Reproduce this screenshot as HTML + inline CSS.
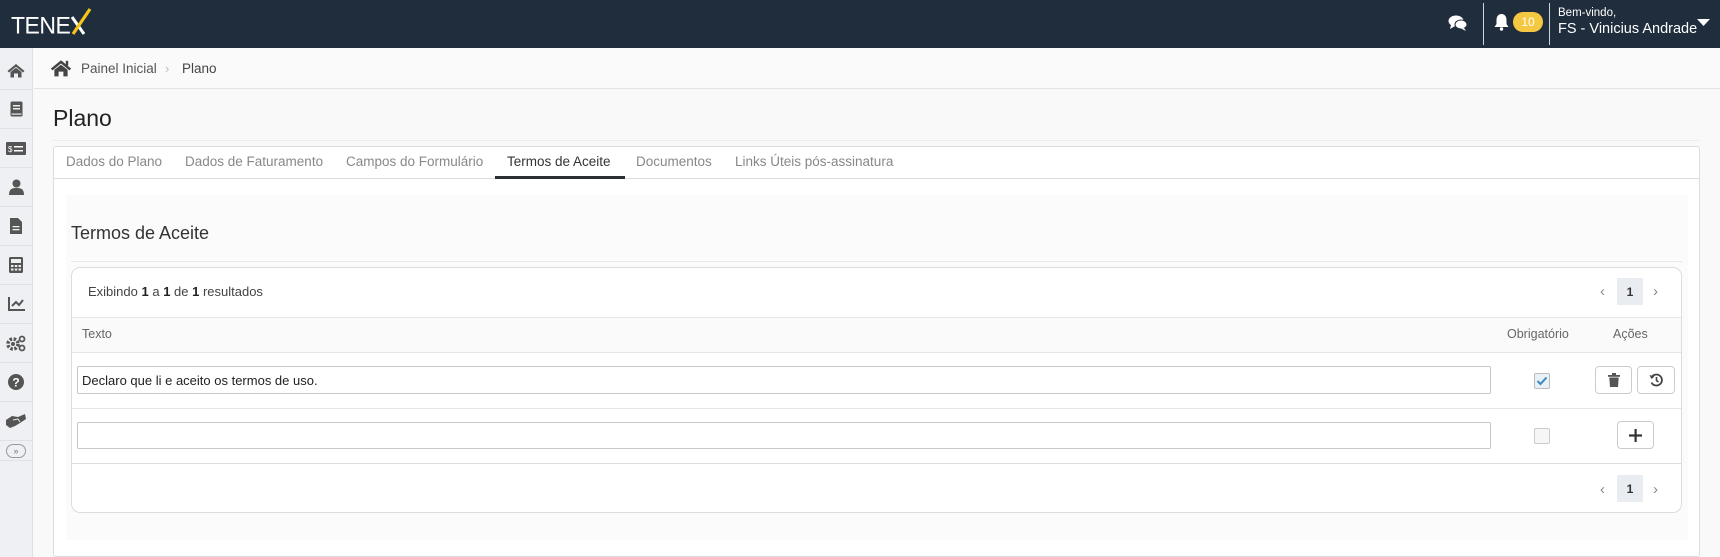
<!DOCTYPE html>
<html><head><meta charset="utf-8"><style>
*{box-sizing:border-box;margin:0;padding:0}
body{width:1720px;height:557px;overflow:hidden;background:#f9f9f9;font-family:"Liberation Sans",sans-serif;color:#333;position:relative}
.abs{position:absolute}
.hdr{left:0;top:0;width:1720px;height:48px;background:#1f2d3d}
.sb{left:0;top:48px;width:33px;height:509px;background:#eef0f3;border-right:1px solid #dde0e4}
.sbi{position:absolute;left:0;width:32px;height:39px;border-bottom:1px solid #dfe2e6;display:flex;align-items:center;justify-content:center}
.txt{white-space:nowrap}
.tab{position:absolute;top:154px;font-size:13.5px;color:#888}
.pg{font-size:13px;color:#777}
.pbox{background:#e9edf2;width:26px;height:27px;font-size:12px;font-weight:bold;color:#333;display:flex;align-items:center;justify-content:center}
.inp{background:#fff;border:1px solid #c8c8c8;border-radius:2px}
.btn{background:#fff;border:1px solid #ccc;border-radius:4px;display:flex;align-items:center;justify-content:center}
</style></head><body>
<div class="abs hdr"></div>
<div class="abs txt" style="left:11px;top:12px;font-size:23px;color:#fff;letter-spacing:-0.5px;transform:scaleY(1.05)">TENE</div>
<svg class="abs" style="left:68px;top:6px" width="28" height="34" viewBox="0 0 28 34"><path d="M4 11 L16 28" stroke="#fff" stroke-width="3"/><path d="M5 28 L22 3" stroke="#f5c518" stroke-width="3.2"/></svg>
<!-- chat -->
<svg class="abs" style="left:1448px;top:14px" width="20" height="18" viewBox="0 0 20 18"><ellipse cx="8" cy="7" rx="7.5" ry="5.5" fill="#fff"/><path d="M3 11 L2 15 L7 12Z" fill="#fff"/><ellipse cx="13" cy="10.5" rx="6" ry="4.5" fill="#fff" stroke="#1f2d3d" stroke-width="1"/><path d="M16 14 L18 17 L13 14.5Z" fill="#fff"/></svg>
<div class="abs" style="left:1483px;top:3px;width:1px;height:42px;background:#cfd4da"></div>
<svg class="abs" style="left:1494px;top:13px" width="15" height="18" viewBox="0 0 15 18"><path d="M7.5 1 C4 1 2.5 4 2.5 7 L2.5 11 L0.5 14 L14.5 14 L12.5 11 L12.5 7 C12.5 4 11 1 7.5 1Z" fill="#fff"/><circle cx="7.5" cy="16" r="1.7" fill="#fff"/></svg>
<div class="abs" style="left:1513px;top:12px;width:30px;height:20px;border-radius:10px;background:#f5c842;color:#fff;font-size:12px;display:flex;align-items:center;justify-content:center">10</div>
<div class="abs" style="left:1549px;top:3px;width:1px;height:42px;background:#cfd4da"></div>
<div class="abs txt" style="left:1558px;top:7px;font-size:11.5px;color:#fff">Bem-vindo,</div>
<div class="abs txt" style="left:1558px;top:21px;font-size:14.5px;color:#fff">FS - Vinicius Andrade</div>
<svg class="abs" style="left:1697px;top:19px" width="13" height="8"><path d="M0 0H13L6.5 7Z" fill="#fff"/></svg>

<div class="abs sb"></div>
<div class="sbi" style="top:51px"><svg width="18" height="15" viewBox="0 0 18 15"><path d="M9 1 L0.5 8 L2 9.5 L9 3.8 L16 9.5 L17.5 8Z M3.5 9 L9 4.8 L14.5 9 V14.5 H11 V10.5 H7 V14.5 H3.5Z" fill="#555"/></svg></div>
<div class="sbi" style="top:90px"><svg width="13" height="16"><rect x="0.5" y="0.5" width="12" height="15" rx="1.5" fill="#555"/><rect x="3" y="4" width="7" height="1.5" fill="#eee"/><rect x="3" y="7" width="7" height="1.5" fill="#eee"/><rect x="1.5" y="12.5" width="10" height="1.2" fill="#eee"/></svg></div>
<div class="sbi" style="top:129px"><svg width="20" height="13"><rect width="20" height="13" rx="1" fill="#555"/><text x="2" y="10" font-size="8" fill="#fff" font-family="Liberation Sans">$</text><rect x="8" y="4" width="9" height="1.5" fill="#fff"/><rect x="8" y="8" width="9" height="1.5" fill="#fff"/></svg></div>
<div class="sbi" style="top:168px"><svg width="15" height="16"><circle cx="7.5" cy="4.5" r="4" fill="#555"/><path d="M0 16 C0 10 3 9 7.5 9 C12 9 15 10 15 16Z" fill="#555"/></svg></div>
<div class="sbi" style="top:207px"><svg width="12" height="16"><path d="M0 0H8L12 4V16H0Z" fill="#555"/><rect x="2.5" y="8" width="7" height="1.3" fill="#eee"/><rect x="2.5" y="11" width="7" height="1.3" fill="#eee"/></svg></div>
<div class="sbi" style="top:246px"><svg width="14" height="16"><rect width="14" height="16" rx="1.5" fill="#555"/><rect x="2" y="2" width="10" height="4" fill="#eee"/><g fill="#eee"><rect x="2" y="8" width="2.5" height="2"/><rect x="5.8" y="8" width="2.5" height="2"/><rect x="9.5" y="8" width="2.5" height="2"/><rect x="2" y="11.5" width="2.5" height="2"/><rect x="5.8" y="11.5" width="2.5" height="2"/><rect x="9.5" y="11.5" width="2.5" height="2"/></g></svg></div>
<div class="sbi" style="top:285px"><svg width="17" height="14"><path d="M1 0V13H17" stroke="#555" stroke-width="2" fill="none"/><path d="M4 9 L8 5 L11 8 L15 3" stroke="#555" stroke-width="2" fill="none"/></svg></div>
<div class="sbi" style="top:324px"><svg width="20" height="17"><circle cx="7" cy="9" r="5" fill="none" stroke="#555" stroke-width="3.5" stroke-dasharray="2.5 1.5"/><circle cx="7" cy="9" r="2" fill="#555"/><circle cx="16" cy="4" r="2.5" fill="none" stroke="#555" stroke-width="1.8"/><circle cx="16" cy="13" r="2.5" fill="none" stroke="#555" stroke-width="1.8"/></svg></div>
<div class="sbi" style="top:363px"><svg width="16" height="16"><circle cx="8" cy="8" r="8" fill="#555"/><text x="8" y="12.5" text-anchor="middle" font-size="12" font-weight="bold" fill="#fff" font-family="Liberation Sans">?</text></svg></div>
<div class="sbi" style="top:402px"><svg width="20" height="15"><path d="M0 6 L6 2 L12 3 L19 0 L20 5 L14 9 L9 12 L4 14 L0 11Z" fill="#555"/><path d="M7 6 L12 5 L14 8" stroke="#eee" stroke-width="1" fill="none"/></svg></div>
<div class="sbi" style="top:441px;height:20px"><div style="width:20px;height:14px;border:1px solid #999;border-radius:8px;font-size:9px;color:#777;text-align:center;line-height:12px">»</div></div>

<div class="abs" style="left:34px;top:48px;width:1686px;height:41px;border-bottom:1px solid #e3e3e3;background:#fafafa"></div>
<svg class="abs" style="left:50px;top:59px" width="22" height="18" viewBox="0 0 18 15"><path d="M9 1 L0.5 8 L2 9.5 L9 3.8 L16 9.5 L17.5 8Z M3.5 9 L9 4.8 L14.5 9 V14.5 H11 V10.5 H7 V14.5 H3.5Z" fill="#444"/><rect x="13" y="1.5" width="2" height="4" fill="#444"/></svg>
<div class="abs txt" style="left:81px;top:61px;font-size:13.5px;color:#555">Painel Inicial</div>
<div class="abs txt" style="left:165px;top:61px;font-size:13px;color:#bbb">›</div>
<div class="abs txt" style="left:182px;top:61px;font-size:13.5px;color:#444">Plano</div>
<div class="abs txt" style="left:53px;top:105px;font-size:23px;color:#222">Plano</div>
<div class="abs" style="left:53px;top:140px;width:1646px;height:1px;background:#ececec"></div>

<div class="abs" style="left:53px;top:146px;width:1647px;height:411px;background:#fff;border:1px solid #ddd;border-radius:3px"></div>
<div class="abs" style="left:54px;top:178px;width:1645px;height:1px;background:#ddd"></div>
<div class="tab txt" style="left:66px">Dados do Plano</div>
<div class="tab txt" style="left:185px">Dados de Faturamento</div>
<div class="tab txt" style="left:346px">Campos do Formulário</div>
<div class="tab txt" style="left:507px;color:#333">Termos de Aceite</div>
<div class="tab txt" style="left:636px">Documentos</div>
<div class="tab txt" style="left:735px">Links Úteis pós-assinatura</div>
<div class="abs" style="left:495px;top:176px;width:130px;height:3px;background:#2a2f36"></div>

<div class="abs" style="left:66px;top:195px;width:1622px;height:345px;background:#fbfbfb"></div>
<div class="abs txt" style="left:71px;top:223px;font-size:18px;color:#333">Termos de Aceite</div>
<div class="abs" style="left:71px;top:261px;width:1611px;height:1px;background:#e8e8e8"></div>

<div class="abs" style="left:71px;top:267px;width:1611px;height:246px;background:#fff;border:1px solid #ddd;border-radius:9px;overflow:hidden">
 <div class="abs" style="left:0;top:49px;width:100%;height:36px;background:#fafafa;border-top:1px solid #e6e6e6;border-bottom:1px solid #e6e6e6"></div>
 <div class="abs" style="left:0;top:140px;width:100%;height:1px;background:#e6e6e6"></div>
 <div class="abs" style="left:0;top:195px;width:100%;height:1px;background:#ddd"></div>
</div>
<div class="abs txt pg" style="left:88px;top:284px;color:#444">Exibindo <b style="color:#222">1</b> a <b style="color:#222">1</b> de <b style="color:#222">1</b> resultados</div>
<div class="abs txt pg" style="left:1600px;top:283px;font-size:15px;color:#888">‹</div>
<div class="abs pbox" style="left:1617px;top:278px">1</div>
<div class="abs txt pg" style="left:1653px;top:283px;font-size:15px;color:#888">›</div>

<div class="abs txt" style="left:82px;top:327px;font-size:12.5px;color:#666">Texto</div>
<div class="abs txt" style="left:1507px;top:327px;font-size:12.5px;color:#666">Obrigatório</div>
<div class="abs txt" style="left:1613px;top:327px;font-size:12.5px;color:#666">Ações</div>

<div class="abs inp" style="left:77px;top:366px;width:1414px;height:28px"></div>
<div class="abs txt" style="left:82px;top:373px;font-size:13px;color:#222">Declaro que li e aceito os termos de uso.</div>
<div class="abs" style="left:1534px;top:373px;width:16px;height:16px;border:1px solid #bbb;background:#e8f1f7;border-radius:2px"><svg width="14" height="14" style="position:absolute;left:0;top:0"><path d="M2.5 7 L5.5 10 L11.5 3.5" stroke="#3a8bbf" stroke-width="2" fill="none"/></svg></div>
<div class="abs btn" style="left:1595px;top:366px;width:37px;height:28px"><svg width="12" height="14"><rect x="0" y="2" width="12" height="1.8" fill="#555"/><rect x="4" y="0" width="4" height="2" fill="#555"/><path d="M1.3 4.5H10.7L10 14H2Z" fill="#555"/></svg></div>
<div class="abs btn" style="left:1637px;top:366px;width:38px;height:28px"><svg width="14" height="14" viewBox="0 0 14 14"><path d="M2.3 5 A5.5 5.5 0 1 1 2.5 9.5" stroke="#444" stroke-width="1.8" fill="none"/><path d="M0.5 2 L2.5 6 L5.5 3.5Z" fill="#444"/><path d="M7.5 4 V7.5 L9.5 9" stroke="#444" stroke-width="1.6" fill="none"/></svg></div>

<div class="abs inp" style="left:77px;top:422px;width:1414px;height:27px"></div>
<div class="abs" style="left:1534px;top:428px;width:16px;height:16px;border:1px solid #ccc;background:#f6f6f6;border-radius:2px"></div>
<div class="abs btn" style="left:1617px;top:421px;width:37px;height:28px"><svg width="13" height="13"><rect x="5.5" y="0" width="2.2" height="13" fill="#333"/><rect x="0" y="5.4" width="13" height="2.2" fill="#333"/></svg></div>

<div class="abs txt pg" style="left:1600px;top:481px;font-size:15px;color:#888">‹</div>
<div class="abs pbox" style="left:1617px;top:475px">1</div>
<div class="abs txt pg" style="left:1653px;top:481px;font-size:15px;color:#888">›</div>
</body></html>
